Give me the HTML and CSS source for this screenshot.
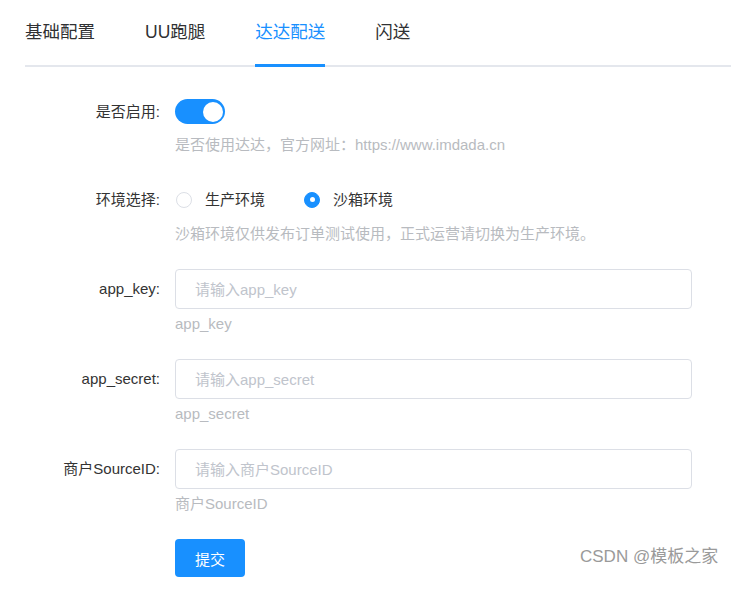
FILE: index.html
```html
<!DOCTYPE html>
<html lang="zh-CN">
<head>
<meta charset="UTF-8">
<title>达达配送</title>
<link rel="stylesheet" href="styles.css">
</head>
<body>
<div class="page">

  <div class="tabs">
    <div class="tab">基础配置</div>
    <div class="tab">UU跑腿</div>
    <div class="tab active">达达配送</div>
    <div class="tab">闪送</div>
  </div>

  <form class="form">
    <!-- 是否启用 -->
    <div class="form-item item-first">
      <label class="form-label label-short">是否启用:</label>
      <div class="form-content">
        <span class="switch on"><span class="knob"></span></span>
        <div class="hint hint-switch">是否使用达达，官方网址：https://www.imdada.cn</div>
      </div>
    </div>

    <!-- 环境选择 -->
    <div class="form-item">
      <label class="form-label label-short">环境选择:</label>
      <div class="form-content">
        <div class="radio-group">
          <span class="radio"><span class="radio-dot"></span>生产环境</span>
          <span class="radio checked"><span class="radio-dot"></span>沙箱环境</span>
        </div>
        <div class="hint hint-radio">沙箱环境仅供发布订单测试使用，正式运营请切换为生产环境。</div>
      </div>
    </div>

    <div class="form-item">
      <label class="form-label">app_key:</label>
      <div class="form-content">
        <input class="input" type="text" placeholder="请输入app_key">
        <div class="hint">app_key</div>
      </div>
    </div>

    <div class="form-item">
      <label class="form-label">app_secret:</label>
      <div class="form-content">
        <input class="input" type="text" placeholder="请输入app_secret">
        <div class="hint">app_secret</div>
      </div>
    </div>

    <div class="form-item">
      <label class="form-label">商户SourceID:</label>
      <div class="form-content">
        <input class="input" type="text" placeholder="请输入商户SourceID">
        <div class="hint">商户SourceID</div>
      </div>
    </div>

    <div class="form-item">
      <div class="form-label"></div>
      <div class="form-content">
        <button type="button" class="submit-btn">提交</button>
      </div>
    </div>
  </form>

  <div class="watermark">CSDN @模板之家</div>
</div>
</body>
</html>
```

FILE: styles.css
```css
body {
  margin: 0;
  padding: 0;
  background-color: #fff;
  font-family: 'Liberation Sans', 'Noto Sans CJK SC', sans-serif;
  color: #333;
}
.page {
  position: relative;
  width: 731px;
  height: 604px;
  overflow: hidden;
}
.tabs {
  display: flex;
  margin-left: 25px;
  height: 65px;
  border-bottom: 2px solid #e4e7ed;
}
.tab {
  height: 64px;
  line-height: 64px;
  margin-right: 50px;
  font-size: 17.5px;
  color: #303133;
  border-bottom: 3px solid transparent;
  cursor: pointer;
}
.tab.active {
  color: #1890ff;
  border-bottom-color: #1890ff;
}
.form {
  padding-top: 32px;
}
.form-item {
  display: flex;
  align-items: flex-start;
  margin-bottom: 24px;
}
.item-first {
  margin-bottom: 31px;
}
.form-label {
  width: 175px;
  box-sizing: border-box;
  padding-right: 15px;
  text-align: right;
  font-size: 15px;
  line-height: 40px;
  color: #333;
}
.form-label.label-short {
  line-height: 25px;
}
.form-content {
  width: 517px;
}
.hint {
  margin-top: 4px;
  font-size: 15px;
  line-height: 22px;
  color: #b8bbc0;
}
.hint-switch {
  margin-top: 10px;
}
.hint-radio {
  margin-top: 11px;
}
.switch {
  display: block;
  position: relative;
  width: 50px;
  height: 25px;
  border-radius: 13px;
  background-color: #dcdfe6;
}
.switch.on {
  background-color: #1890ff;
}
.switch .knob {
  position: absolute;
  top: 2.5px;
  left: 2.5px;
  width: 20px;
  height: 20px;
  border-radius: 50%;
  background-color: #fff;
}
.switch.on .knob {
  left: 27.5px;
}
.radio-group {
  display: flex;
  height: 25px;
  align-items: center;
}
.radio {
  display: flex;
  align-items: center;
  font-size: 15px;
  line-height: 25px;
  color: #333;
  margin-right: 38px;
}
.radio-dot {
  width: 14px;
  height: 14px;
  border: 1px solid #dcdfe6;
  border-radius: 50%;
  margin: 0 13px 0 1px;
  box-sizing: content-box;
}
.radio.checked .radio-dot {
  background-color: #1890ff;
  border-color: #1890ff;
  position: relative;
}
.radio.checked .radio-dot::after {
  content: '';
  position: absolute;
  top: 4.5px;
  left: 4.5px;
  width: 5px;
  height: 5px;
  border-radius: 50%;
  background-color: #fff;
}
.input {
  display: block;
  width: 517px;
  height: 40px;
  box-sizing: border-box;
  padding: 0 19px;
  border: 1px solid #dcdfe6;
  border-radius: 4px;
  font-family: inherit;
  font-size: 15px;
  color: #333;
  outline: none;
}
.input::placeholder {
  color: #c0c4cc;
}
.submit-btn {
  width: 70px;
  height: 38px;
  border: none;
  border-radius: 4px;
  background-color: #1890ff;
  color: #fff;
  font-family: inherit;
  font-size: 15px;
  cursor: pointer;
}
.watermark {
  position: absolute;
  left: 580px;
  top: 547px;
  font-size: 17px;
  line-height: 20px;
  color: #9a9a9a;
  white-space: nowrap;
}
```
